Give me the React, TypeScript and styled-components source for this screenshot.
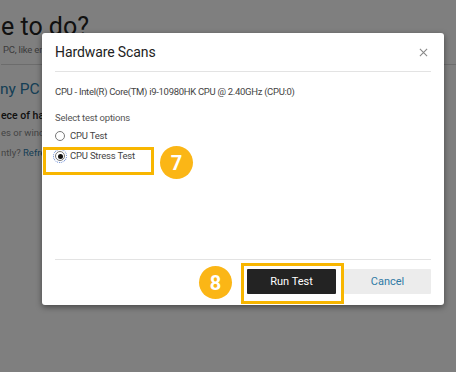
import React from 'react';
import styled, { createGlobalStyle } from 'styled-components';

const GlobalStyle = createGlobalStyle`
  html, body {
    margin: 0;
    padding: 0;
    width: 456px;
    height: 372px;
    overflow: hidden;
    background: #ffffff;
    font-family: Roboto, 'Liberation Sans', Arial, sans-serif;
  }
`;

const Screen = styled.div`
  position: relative;
  width: 456px;
  height: 372px;
  overflow: hidden;
`;

const Page = styled.div`
  display: flex;
  flex-direction: column;
  padding: 12px 0 0 1px;
  color: #222;
`;

const PageTitle = styled.h1`
  margin: 0;
  font-size: 25px;
  line-height: 30px;
  font-weight: 400;
  color: #222;
`;

const PageSub = styled.p`
  margin: 1px 0 0 2px;
  font-size: 9.5px;
  line-height: 14px;
  color: #777;
  letter-spacing: -0.2px;
`;

const Rule = styled.hr`
  margin: 7px 0 0;
  border: none;
  border-top: 1px solid #d8d8d8;
`;

const SectionTitle = styled.h2`
  margin: 14px 0 0 -1px;
  font-size: 15.5px;
  line-height: 20px;
  font-weight: 400;
  color: #2b7dab;
`;

const Lead = styled.p`
  margin: 10px 0 0;
  font-size: 10.5px;
  line-height: 14px;
  font-weight: 500;
  color: #222;
`;

const Note = styled.p<{ $gap: number }>`
  margin: ${({ $gap }) => $gap}px 0 0;
  font-size: 9.5px;
  line-height: 14px;
  color: #888;
`;

const Link = styled.span`
  color: #2b7dab;
`;

const Overlay = styled.div`
  position: absolute;
  inset: 0;
  background: rgba(0, 0, 0, 0.5);
`;

const Modal = styled.div`
  position: absolute;
  left: 42px;
  top: 33px;
  width: 402px;
  height: 272px;
  background: #fff;
  border-radius: 3px;
  box-shadow: 0 2px 6px rgba(0, 0, 0, 0.45);
  display: flex;
  flex-direction: column;
  box-sizing: border-box;
`;

const Header = styled.div`
  margin: 0 13px;
  height: 38px;
  display: flex;
  align-items: center;
  justify-content: space-between;
  border-bottom: 1px solid #e3e3e3;
`;

const Title = styled.h3`
  margin: 0;
  font-size: 14px;
  font-weight: 400;
  letter-spacing: -0.1px;
  color: #222;
`;

const Close = styled.button`
  border: none;
  background: none;
  padding: 0;
  margin-right: 2px;
  width: 12px;
  height: 12px;
  display: flex;
  align-items: center;
  justify-content: center;
`;

const Body = styled.div`
  flex: 1;
  padding: 13px 13px 0;
  display: flex;
  flex-direction: column;
`;

const Info = styled.p`
  margin: 0;
  font-size: 9.5px;
  line-height: 14px;
  letter-spacing: -0.3px;
  color: #444;
`;

const Label = styled.p`
  margin: 12px 0 0;
  font-size: 9.5px;
  line-height: 14px;
  letter-spacing: -0.2px;
  color: #555;
`;

const Options = styled.div`
  display: flex;
  flex-direction: column;
  gap: 6px;
  margin-top: 4px;
`;

const Option = styled.label`
  display: flex;
  align-items: center;
  gap: 5px;
  font-size: 9.5px;
  line-height: 14px;
  letter-spacing: -0.2px;
  color: #444;
`;

const Radio = styled.span<{ $checked?: boolean }>`
  width: 10px;
  height: 10px;
  box-sizing: border-box;
  border-radius: 50%;
  border: 1px solid #777;
  display: flex;
  align-items: center;
  justify-content: center;
  outline: ${({ $checked }) => ($checked ? '1px dotted #5a7fd0' : 'none')};
  outline-offset: 1px;

  &::after {
    content: '';
    width: 5px;
    height: 5px;
    border-radius: 50%;
    background: ${({ $checked }) => ($checked ? '#111' : 'transparent')};
  }
`;

const Footer = styled.div`
  margin: 0 13px;
  height: 46px;
  border-top: 1px solid #e3e3e3;
  display: flex;
  justify-content: flex-end;
  align-items: flex-start;
  padding-top: 9px;
  box-sizing: border-box;
  gap: 8px;
`;

const Button = styled.button<{ $primary?: boolean }>`
  height: 25px;
  width: ${({ $primary }) => ($primary ? 89 : 87)}px;
  border: none;
  border-radius: 1px;
  font-family: Roboto, 'Liberation Sans', Arial, sans-serif;
  font-size: 11px;
  background: ${({ $primary }) => ($primary ? '#232323' : '#ececec')};
  color: ${({ $primary }) => ($primary ? '#fff' : '#2f7aa5')};
`;

const Highlight = styled.div<{ $x: number; $y: number; $w: number; $h: number }>`
  position: absolute;
  left: ${({ $x }) => $x}px;
  top: ${({ $y }) => $y}px;
  width: ${({ $w }) => $w}px;
  height: ${({ $h }) => $h}px;
  box-sizing: border-box;
  border: 3px solid #f8b600;
`;

const Badge = styled.div<{ $x: number; $y: number }>`
  position: absolute;
  left: ${({ $x }) => $x}px;
  top: ${({ $y }) => $y}px;
  width: 33px;
  height: 33px;
  border-radius: 50%;
  background: #fbb616;
  color: #fff;
  font-size: 20px;
  font-weight: 700;
  display: flex;
  align-items: center;
  justify-content: center;
`;

export default function App() {
  return (
    <>
      <GlobalStyle />
      <Screen>
        <Page>
          <PageTitle>e to do?</PageTitle>
          <PageSub>PC, like en</PageSub>
          <Rule />
          <SectionTitle>ny PC</SectionTitle>
          <Lead>ece of ha</Lead>
          <Note $gap={3}>es or windo</Note>
          <Note $gap={6}>
            ntly? <Link>Refre</Link>
          </Note>
        </Page>
        <Overlay />
        <Modal>
          <Header>
            <Title>Hardware Scans</Title>
            <Close aria-label="Close">
              <svg width="9" height="9" viewBox="0 0 10 10">
                <path d="M1 1L9 9M9 1L1 9" stroke="#888" strokeWidth="1.2" />
              </svg>
            </Close>
          </Header>
          <Body>
            <Info>CPU - Intel(R) Core(TM) i9-10980HK CPU @ 2.40GHz (CPU:0)</Info>
            <Label>Select test options</Label>
            <Options>
              <Option>
                <Radio />
                CPU Test
              </Option>
              <Option>
                <Radio $checked />
                CPU Stress Test
              </Option>
            </Options>
          </Body>
          <Footer>
            <Button $primary>Run Test</Button>
            <Button>Cancel</Button>
          </Footer>
          <Highlight $x={1} $y={114} $w={111} $h={28} />
          <Badge $x={118} $y={113}>7</Badge>
          <Highlight $x={199} $y={230} $w={103} $h={41} />
          <Badge $x={157} $y={233}>8</Badge>
        </Modal>
      </Screen>
    </>
  );
}
